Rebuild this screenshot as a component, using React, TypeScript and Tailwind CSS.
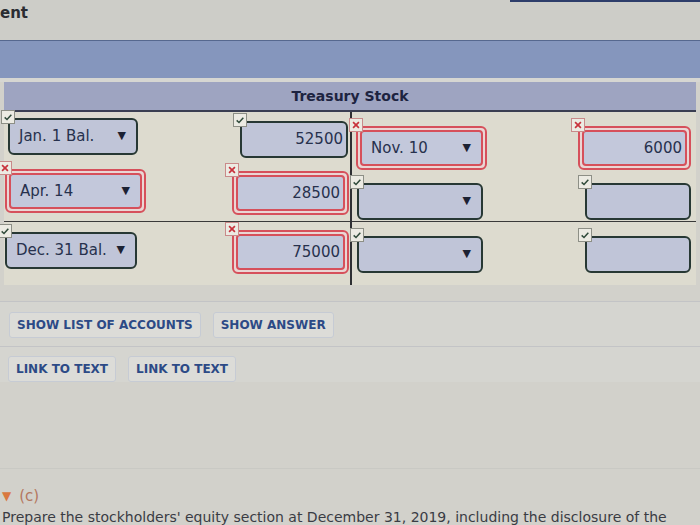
type Status = "ok" | "bad";

function Badge({ status }: { status: Status }) {
  return (
    <div
      className={`absolute -left-[9px] -top-[10px] z-10 flex h-[14px] w-[14px] items-center justify-center border bg-[#ecebe3] ${
        status === "ok" ? "border-[#8d8f86]" : "border-[#c98a8a]"
      }`}
    >
      {status === "ok" ? (
        <svg viewBox="0 0 12 12" className="h-[10px] w-[10px]">
          <path d="M2 6.5 L4.8 9 L10 3.2" fill="none" stroke="#2f4a3a" strokeWidth="1.8" />
        </svg>
      ) : (
        <svg viewBox="0 0 12 12" className="h-[10px] w-[10px]">
          <path d="M2.5 2.5 L9.5 9.5 M9.5 2.5 L2.5 9.5" fill="none" stroke="#c8323c" strokeWidth="2" />
        </svg>
      )}
    </div>
  );
}

function Field({
  status,
  select,
  value,
  width,
}: {
  status: Status;
  select?: boolean;
  value?: string;
  width: string;
}) {
  const inner = (
    <div
      className={`flex h-full items-center ${select ? "justify-between pl-[9px] pr-[10px]" : "justify-end pr-[3px]"} text-[15px] text-[#27314d]`}
    >
      <span>{value}</span>
      {select && <span className="text-[11px] text-[#1c2233]">▼</span>}
    </div>
  );
  if (status === "bad") {
    return (
      <div className={`relative ${width} h-[44px] rounded-md border-2 border-[#d6505b] bg-[#ead6d4] p-[2px]`}>
        <Badge status="bad" />
        <div className="h-full rounded-[4px] border-2 border-[#d6505b] bg-[#c3c8db]">{inner}</div>
      </div>
    );
  }
  return (
    <div className={`relative ${width} h-[37px] rounded-md border-2 border-[#273834] bg-[#c0c5d8]`}>
      <Badge status="ok" />
      {inner}
    </div>
  );
}

function Btn({ label }: { label: string }) {
  return (
    <div className="rounded-[3px] border border-[#c6cbd4] bg-[#dcdcd8] px-[7px] py-[5px] text-[12px] font-bold leading-[14px] text-[#2c4a86]">
      {label}
    </div>
  );
}

export default function App() {
  return (
    <div
      className="relative h-[525px] w-[700px] overflow-hidden bg-[#d2d1cb]"
      style={{ fontFamily: '"DejaVu Sans", Verdana, sans-serif' }}
    >
      <div className="absolute right-0 top-0 h-[2px] w-[190px] bg-[#2d3d6a]" />
      <div className="h-[40px] bg-[#cdcdc8] pt-[4px] text-[15px] font-bold leading-[18px] text-[#2b2d33]">ent</div>
      <div className="h-[38px] border-t border-[#56688f] bg-[#8596bd]" />
      <div className="h-[4px] bg-[#d6d6d2]" />
      <div className="mx-[4px] bg-[#dddbcf]">
        <div className="flex h-[30px] items-center justify-center border-b-2 border-[#3a3e52] bg-[#9ea4c1] text-[14px] font-bold text-[#1d2340]">
          Treasury Stock
        </div>
        <div className="flex">
          <div className="w-[348px] border-r-2 border-[#2e2f33]">
            <div className="flex h-[56px] items-start justify-between pl-[4px] pr-[2px] pt-[6px]">
              <Field status="ok" select value="Jan. 1 Bal." width="w-[130px]" />
              <div className="pt-[3px]">
                <Field status="ok" value="52500" width="w-[108px]" />
              </div>
            </div>
            <div className="flex h-[54px] items-start justify-between border-b border-[#3a3a3a] pl-[1px] pr-[1px] pt-[1px]">
              <Field status="bad" select value="Apr. 14" width="w-[141px]" />
              <div className="pt-[2px]">
                <Field status="bad" value="28500" width="w-[117px]" />
              </div>
            </div>
            <div className="flex h-[63px] items-start justify-between pl-[1px] pr-[1px] pt-[8px]">
              <div className="pt-[2px]">
                <Field status="ok" select value="Dec. 31 Bal." width="w-[132px]" />
              </div>
              <Field status="bad" value="75000" width="w-[117px]" />
            </div>
          </div>
          <div className="flex-1">
            <div className="flex h-[56px] items-start justify-between pl-[4px] pr-[5px] pt-[14px]">
              <Field status="bad" select value="Nov. 10" width="w-[131px]" />
              <Field status="bad" value="6000" width="w-[113px]" />
            </div>
            <div className="flex h-[54px] items-start justify-between border-b border-[#3a3a3a] pl-[5px] pr-[5px] pt-[15px]">
              <Field status="ok" select width="w-[126px]" />
              <Field status="ok" width="w-[106px]" />
            </div>
            <div className="flex h-[63px] items-start justify-between pl-[5px] pr-[5px] pt-[14px]">
              <Field status="ok" select width="w-[126px]" />
              <Field status="ok" width="w-[106px]" />
            </div>
          </div>
        </div>
      </div>
      <div className="mt-[16px] border-t border-[#c3c4c6] bg-[#d5d5d0]">
        <div className="flex gap-[12px] border-b border-[#c3c4c6] px-[9px] pb-[8px] pt-[10px]">
          <Btn label="SHOW LIST OF ACCOUNTS" />
          <Btn label="SHOW ANSWER" />
        </div>
        <div className="flex gap-[12px] px-[8px] pt-[9px]">
          <Btn label="LINK TO TEXT" />
          <Btn label="LINK TO TEXT" />
        </div>
      </div>
      <div className="mt-[86px] border-t border-[#c9c9c4]" />
      <div className="mt-[18px] flex items-center gap-[8px] pl-[2px] text-[15px] leading-[18px]">
        <span className="text-[12px] text-[#d9783f]">▼</span>
        <span className="text-[#b4775f]">(c)</span>
      </div>
      <div className="mt-[3px] whitespace-nowrap pl-[2px] text-[14px] leading-[18px] text-[#3a3c44]">
        Prepare the stockholders' equity section at December 31, 2019, including the disclosure of the
      </div>
    </div>
  );
}
